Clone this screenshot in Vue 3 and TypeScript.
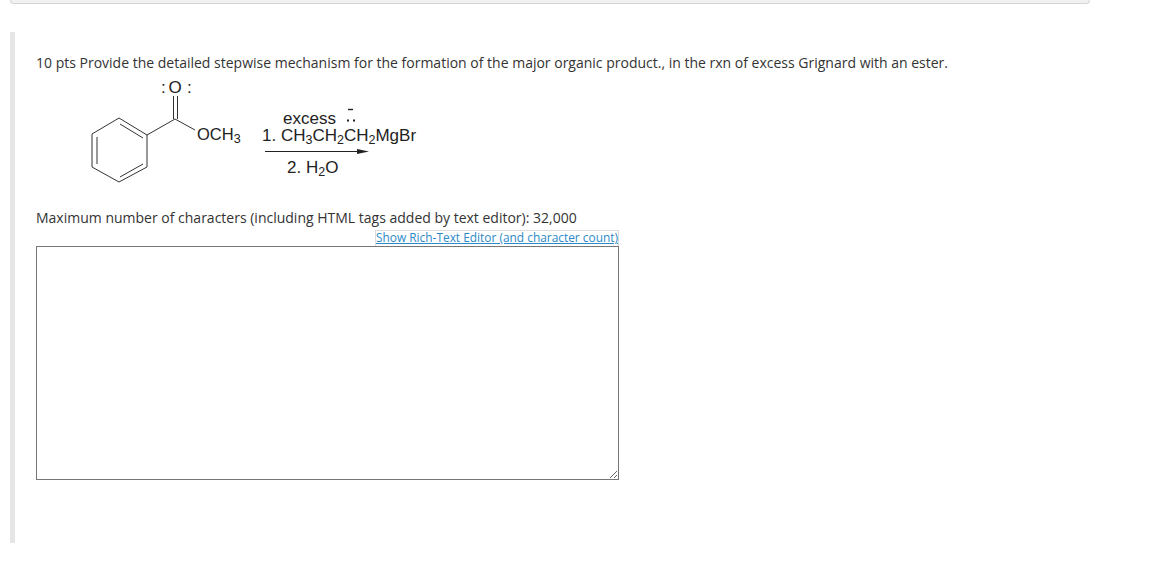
<script setup lang="ts">
const question: string = '10 pts Provide the detailed stepwise mechanism for the formation of the major organic product., in the rxn of excess Grignard with an ester.'
</script>

<template>
  <div class="page">
    <div class="topbar"></div>
    <section class="question">
      <p class="prompt">{{ question }}</p>
      <svg class="scheme" width="400" height="112" viewBox="36 76 400 112" role="img">
        <g fill="none" stroke="#333" stroke-width="1">
          <path d="M119 118 L147 135 L147 167 L119 182 L92 167 L92 134 Z" />
          <path d="M120 124 L143 138 M143 164 L120 177 M97 137 L97 164" />
          <path d="M147 135 L175 119 L195 130 M173.5 119 L173.5 96 M177.5 119 L177.5 96" />
        </g>
        <g class="chem">
          <text y="93" class="big"><tspan x="161">:</tspan><tspan x="168.5">O</tspan><tspan x="187">:</tspan></text>
          <text x="197" y="140" class="och">OCH<tspan dy="3" class="sub">3</tspan></text>
          <text x="283" y="124">excess</text>
          <text x="262" y="141">1. CH<tspan dy="3" class="sub">3</tspan><tspan dy="-3">CH</tspan><tspan dy="3" class="sub">2</tspan><tspan dy="-3">CH</tspan><tspan dy="3" class="sub">2</tspan><tspan dy="-3">MgBr</tspan></text>
          <text x="287" y="173">2. H<tspan dy="3" class="sub">2</tspan><tspan dy="-3">O</tspan></text>
        </g>
        <path d="M348 109.5 H353" stroke="#222" stroke-width="1.4" fill="none" />
        <path d="M347 120.5 H349 M353 120.5 H355" stroke="#222" stroke-width="2" fill="none" />
        <path d="M265 151.5 H358" stroke="#222" stroke-width="1.2" />
        <path d="M357 149 L369 151.5 L357 154 Z" fill="#222" />
      </svg>
      <p class="limit">Maximum number of characters (including HTML tags added by text editor): 32,000</p>
      <div class="editor">
        <div class="toggle"><a href="#" class="toggle-link">Show Rich-Text Editor (and character count)</a></div>
        <textarea class="answer"></textarea>
      </div>
    </section>
  </div>
</template>

<style>
html, body { margin: 0; background: #fff; }
</style>

<style scoped>
.page {
  width: 1164px;
  height: 563px;
  overflow: hidden;
  font-family: "Open Sans", "Liberation Sans", sans-serif;
  color: #333;
}
.topbar {
  width: 1078px;
  height: 3px;
  margin-left: 10px;
  background: #f1f1f1;
  border: 1px solid #d4d4d4;
  border-top: 0;
  border-radius: 0 0 4px 4px;
}
.question {
  width: 1054px;
  height: 511px;
  margin: 28px 0 0 10px;
  padding: 21px 0 0 21px;
  box-sizing: border-box;
  border-left: 5px solid #e5e5e5;
}
.prompt, .limit {
  margin: 0;
  font-size: 14px;
  line-height: 19px;
  white-space: nowrap;
}
.scheme {
  display: block;
  margin-top: 4px;
}
.chem text {
  font-family: "Liberation Sans", Arial, sans-serif;
  font-size: 17px;
  fill: #222;
}
.chem .big { font-size: 17px; }
.chem .och { font-size: 16.5px; }
.chem .sub { font-size: 12.5px; }
.limit { margin-top: 20px; }
.editor {
  width: 583px;
  margin-top: 3px;
  display: flex;
  flex-direction: column;
  align-items: flex-end;
}
.toggle {
  box-sizing: border-box;
  width: 244px;
  height: 16px;
  border: 1px solid #dcdcdc;
  border-bottom: 0;
  line-height: 11px;
  white-space: nowrap;
  overflow: visible;
}
.toggle-link {
  font-size: 11.9px;
  color: #2d8ac7;
  text-decoration: underline;
}
.answer {
  display: block;
  box-sizing: border-box;
  width: 583px;
  height: 234px;
  margin: 0;
  padding: 4px;
  border: 1px solid #767676;
  background: #fff;
}
</style>
